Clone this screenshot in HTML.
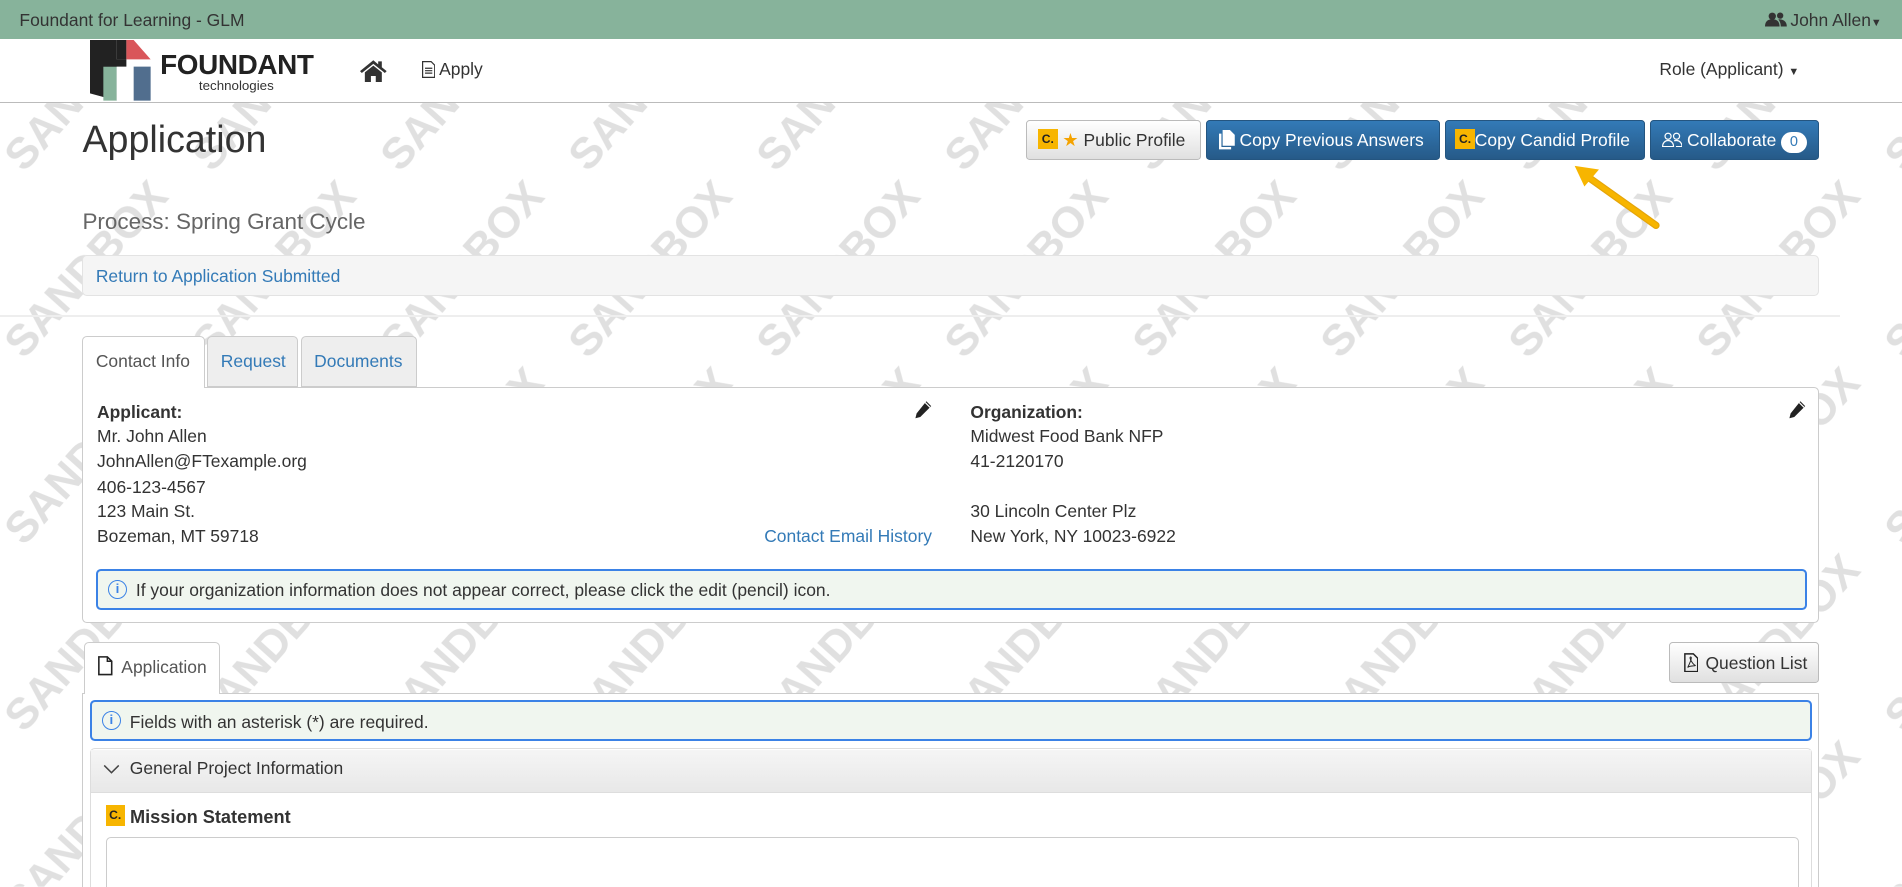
<!DOCTYPE html>
<html><head><meta charset="utf-8">
<style>
html,body{margin:0;padding:0;width:1902px;height:887px;overflow:hidden;background:#fff;}
#w{zoom:1.2130;width:1568px;height:731px;position:relative;font-family:"Liberation Sans",Arial,sans-serif;font-size:14.4px;color:#333;overflow:hidden;}
.a{position:absolute;}
.top{left:0;top:0;width:1568px;height:32px;background:#87b39b;}
.nav{left:0;top:32px;width:1568px;height:52px;background:#fff;border-bottom:1px solid #bbb;}
.btn{position:absolute;top:99px;height:33px;border-radius:3px;line-height:32px;font-size:14.4px;box-sizing:border-box;white-space:nowrap;}
.blue{background:linear-gradient(#337ab7,#265a88);border:1px solid #245580;color:#fff;}
.badge{display:inline-block;width:16px;height:17px;background:#f7b500;color:#222;font-weight:bold;font-size:10px;line-height:17px;text-align:center;vertical-align:middle;position:relative;top:-2px;}
.link{color:#337ab7;}
.alert{position:absolute;border:2px solid #3b82e6;border-radius:4px;background:#f0f6ef;box-sizing:border-box;}
.ic{position:absolute;width:14px;height:14px;border:1.5px solid #3b82e6;border-radius:50%;color:#3b82e6;font-size:11px;font-weight:bold;text-align:center;line-height:14px;box-sizing:content-box;}
.ln{position:absolute;white-space:nowrap;}
</style></head><body><div id="w">
<svg class="a" style="left:0;top:0" width="1568" height="731">
<defs><pattern id="p" x="-6" y="-9" width="155" height="154" patternUnits="userSpaceOnUse">
<text x="0" y="0" transform="translate(77,77) rotate(-48)" text-anchor="middle" dominant-baseline="central" font-family="Liberation Sans" font-weight="bold" font-size="36" fill="#e0e0e0">SANDBOX</text>
</pattern></defs>
<rect x="0" y="85" width="1568" height="646" fill="url(#p)"/>
</svg>
<div class="a top"></div>
<div class="ln" style="left:16px;top:8px;color:#333;">Foundant for Learning - GLM</div>
<svg class="a" style="left:1455px;top:10px" width="18" height="13" viewBox="0 0 18 13"><circle cx="6" cy="3.5" r="3" fill="#333"/><path d="M0 12c0-4 2-6 6-6s6 2 6 6z" fill="#333"/><circle cx="12.5" cy="3" r="2.6" fill="#333"/><path d="M11 6c4 0 7 1.5 7 6h-5c0-3-1-4.5-2-6z" fill="#333"/></svg>
<div class="ln" style="left:1476px;top:8px;color:#333;">John Allen<span style="font-size:9px;">▼</span></div>
<div class="a nav"></div>
<svg class="a" style="left:74px;top:33px" width="52" height="50" viewBox="0 0 52 50"><path d="M0 0h22v50L0 44z" fill="#222"/><path d="M22 0h8v16H22z" fill="#222"/><path d="M30 0h6l14 16H30z" fill="#d9565a"/><path d="M11 22h11v28H11z" fill="#87b39b"/><path d="M22 22h14v28H22z" fill="#fff"/><path d="M36 22h14v28H36z" fill="#516e8e"/><path d="M0 16h30v6H0z" fill="#222"/></svg>
<div class="ln" style="left:132px;top:40px;font-size:23px;font-weight:bold;color:#222;letter-spacing:-0.3px;">FOUNDANT</div>
<div class="ln" style="left:164px;top:64px;font-size:11px;color:#333;">technologies</div>
<svg class="a" style="left:297px;top:49px" width="22" height="19" viewBox="0 0 22 19"><path d="M11 1L0 10l1.5 1.5L11 4l9.5 7.5L22 10l-4-3.2V2h-3v2.4z" fill="#333"/><path d="M4 11l7-5.5 7 5.5v8h-5v-5h-4v5H4z" fill="#333"/></svg>
<svg class="a" style="left:348px;top:50px" width="11" height="14" viewBox="0 0 11 14"><path d="M.5.5h7l3 3v10H.5z" fill="none" stroke="#333"/><path d="M2.5 6h6M2.5 8h6M2.5 10h6" stroke="#333"/></svg>
<div class="ln" style="left:362px;top:49px;">Apply</div>
<div class="ln" style="left:1368px;top:49px;">Role (Applicant) <span style="font-size:9px;">▼</span></div>

<div class="ln" style="left:68px;top:97px;font-size:31px;color:#333;">Application</div>

<div class="btn" style="left:846px;width:144px;background:linear-gradient(#fff,#e0e0e0);border:1px solid #bbb;color:#333;padding-left:9px;"><span class="badge">C.</span> <span style="color:#f4a300;font-size:15px;">★</span> Public Profile</div>
<div class="btn blue" style="left:994px;width:193px;padding-left:10px;"><svg width="13" height="16" viewBox="0 0 13 16" style="vertical-align:-3px"><path d="M3 0h6l4 4v9H3z" fill="#fff"/><path d="M0 3h2v11h8v2H0z" fill="#fff"/></svg> Copy Previous Answers</div>
<div class="btn blue" style="left:1191px;width:165px;padding-left:8px;"><span class="badge">C.</span>Copy Candid Profile</div>
<div class="btn blue" style="left:1360px;width:140px;padding-left:9px;"><svg width="17" height="13" viewBox="0 0 17 13" style="vertical-align:-1px"><circle cx="5" cy="3.5" r="2.5" fill="none" stroke="#fff"/><path d="M.5 12c0-3 2-5 4.5-5s4.5 2 4.5 5z" fill="none" stroke="#fff"/><circle cx="12" cy="3.5" r="2.5" fill="none" stroke="#fff"/><path d="M10 7.3c.6-.2 1.3-.3 2-.3 2.5 0 4.5 2 4.5 5h-5" fill="none" stroke="#fff"/></svg> Collaborate <span style="display:inline-block;background:#fff;color:#337ab7;border-radius:9px;width:21px;height:17px;line-height:17px;text-align:center;font-size:12px;">0</span></div>
<svg class="a" style="left:1290px;top:128px" width="90" height="65" viewBox="0 0 90 65"><path d="M75 58L16 16" stroke="#e5a50a" stroke-width="6" stroke-linecap="round"/><path d="M75 58L16 16" stroke="#f7b500" stroke-width="4" stroke-linecap="round"/><path d="M8 9l20 3-12 14z" fill="#f7b500"/></svg>

<div class="ln" style="left:68px;top:172px;font-size:18.5px;color:#666;">Process: Spring Grant Cycle</div>
<div class="a" style="left:68px;top:210px;width:1432px;height:34px;background:#f5f5f5;border:1px solid #e3e3e3;border-radius:4px;box-sizing:border-box;"></div>
<div class="ln link" style="left:79px;top:219px;">Return to Application Submitted</div>
<div class="a" style="left:0;top:260px;width:1517px;height:1px;background:#eee;"></div>

<div class="a" style="left:68px;top:319px;width:1432px;height:195px;background:#fff;border:1px solid #ccc;border-radius:0 4px 4px 4px;box-sizing:border-box;"></div>
<div class="a" style="left:68px;top:277px;width:101px;height:43px;background:#fff;border:1px solid #ccc;border-bottom:none;border-radius:4px 4px 0 0;box-sizing:border-box;"></div>
<div class="a" style="left:171px;top:277px;width:75px;height:42px;background:#eee;border:1px solid #ccc;border-radius:4px 4px 0 0;box-sizing:border-box;"></div>
<div class="a" style="left:248px;top:277px;width:96px;height:42px;background:#eee;border:1px solid #ccc;border-radius:4px 4px 0 0;box-sizing:border-box;"></div>
<div class="ln" style="left:79px;top:289px;color:#555;">Contact Info</div>
<div class="ln link" style="left:182px;top:289px;">Request</div>
<div class="ln link" style="left:259px;top:289px;">Documents</div>

<div class="ln" style="left:80px;top:331px;font-weight:bold;">Applicant:</div>
<div class="ln" style="left:80px;top:351px;">Mr. John Allen</div>
<div class="ln" style="left:80px;top:372px;">JohnAllen@FTexample.org</div>
<div class="ln" style="left:80px;top:393px;">406-123-4567</div>
<div class="ln" style="left:80px;top:413px;">123 Main St.</div>
<div class="ln" style="left:80px;top:434px;">Bozeman, MT 59718</div>
<div class="ln link" style="left:630px;top:434px;">Contact Email History</div>
<svg class="a" style="left:753px;top:330px" width="16" height="16" viewBox="0 0 16 16"><path d="M11 1l4 4-9 9-4 1 1-4z" fill="#222"/><path d="M10 2l4 4" stroke="#fff" stroke-width="1"/></svg>
<div class="ln" style="left:800px;top:331px;font-weight:bold;">Organization:</div>
<div class="ln" style="left:800px;top:351px;">Midwest Food Bank NFP</div>
<div class="ln" style="left:800px;top:372px;">41-2120170</div>
<div class="ln" style="left:800px;top:413px;">30 Lincoln Center Plz</div>
<div class="ln" style="left:800px;top:434px;">New York, NY 10023-6922</div>
<svg class="a" style="left:1473px;top:330px" width="16" height="16" viewBox="0 0 16 16"><path d="M11 1l4 4-9 9-4 1 1-4z" fill="#222"/><path d="M10 2l4 4" stroke="#fff" stroke-width="1"/></svg>
<div class="alert" style="left:79px;top:469px;width:1411px;height:34px;"></div>
<div class="ic" style="left:89px;top:478px;">i</div>
<div class="ln" style="left:112px;top:478px;">If your organization information does not appear correct, please click the edit (pencil) icon.</div>

<div class="a" style="left:68px;top:571px;width:1432px;height:200px;background:#fff;border:1px solid #ccc;box-sizing:border-box;"></div>
<div class="a" style="left:69px;top:529px;width:112px;height:43px;background:#fff;border:1px solid #ccc;border-bottom:none;border-radius:4px 4px 0 0;box-sizing:border-box;"></div>
<svg class="a" style="left:81px;top:541px" width="12" height="16" viewBox="0 0 12 16"><path d="M.7.7h7l3.6 3.6v11H.7z" fill="none" stroke="#222" stroke-width="1.3"/><path d="M7.7.7v3.6h3.6" fill="none" stroke="#222" stroke-width="1.2"/></svg>
<div class="ln" style="left:100px;top:542px;color:#555;">Application</div>
<div class="a" style="left:1376px;top:529px;width:124px;height:34px;background:linear-gradient(#fff,#e0e0e0);border:1px solid #bbb;border-radius:3px;box-sizing:border-box;"></div>
<svg class="a" style="left:1388px;top:538px" width="12" height="16" viewBox="0 0 12 16"><path d="M.7.7h7l3.6 3.6v11H.7z" fill="none" stroke="#222" stroke-width="1.2"/><path d="M3 12c2-4 3-7 3-8s-1-1-1 0 2 5 4 6-5 0-6 2z" fill="none" stroke="#222" stroke-width=".8"/></svg>
<div class="ln" style="left:1406px;top:538px;">Question List</div>
<div class="alert" style="left:74px;top:577px;width:1420px;height:34px;"></div>
<div class="ic" style="left:84px;top:586px;">i</div>
<div class="ln" style="left:107px;top:587px;">Fields with an asterisk (*) are required.</div>
<div class="a" style="left:74px;top:617px;width:1420px;height:130px;border:1px solid #ddd;border-radius:4px;box-sizing:border-box;"></div>
<div class="a" style="left:75px;top:618px;width:1418px;height:35px;background:linear-gradient(#f5f5f5,#e8e8e8);border-bottom:1px solid #ddd;"></div>
<svg class="a" style="left:85px;top:629px" width="14" height="10" viewBox="0 0 14 10"><path d="M1 2l6 6 6-6" fill="none" stroke="#444" stroke-width="1.2"/></svg>
<div class="ln" style="left:107px;top:625px;color:#333;">General Project Information</div>
<div class="ln" style="left:87px;top:665px;font-weight:bold;font-size:15px;"><span class="badge">C.</span> Mission Statement</div>
<div class="a" style="left:87px;top:690px;width:1396px;height:60px;border:1px solid #ccc;border-radius:4px;box-sizing:border-box;"></div>
</div></body></html>
